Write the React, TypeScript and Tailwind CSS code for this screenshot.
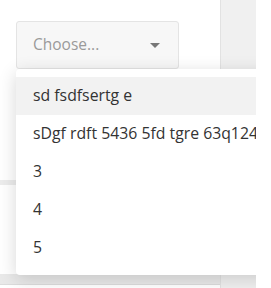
import React from 'react';

const options = ['sd fsdfsertg e', 'sDgf rdft 5436 5fd tgre 63q1245 wert', '3', '4', '5'];

export default function App() {
  return (
    <div className="w-[271px] h-[288px] bg-white" style={{ fontFamily: '"Open Sans", sans-serif' }}>
      <div className="relative w-[256px] h-[288px] overflow-hidden flex">
        {/* page behind the menu */}
        <div className="w-[220px] flex flex-col">
          <div className="pt-[21px] pl-4">
            <button className="w-[163px] h-[48px] flex items-center justify-between pl-4 pr-[18px] bg-[#f7f7f7] border border-[#e4e4e4] rounded-[3px]">
              <span className="text-[15.5px] text-[#9a9a9a]">Choose...</span>
              <span className="w-0 h-0 border-l-[5px] border-r-[5px] border-t-[5px] border-l-transparent border-r-transparent border-t-[#777]" />
            </button>
          </div>
          <div className="mt-[111px] h-[5px] bg-[#ececec]" />
          <div className="mt-[89px] h-[11px] bg-[#e9e9e9] border-b border-[#dcdcdc]" />
        </div>
        <div className="w-[36px] bg-[#f0f0f0] border-l border-[#e2e2e2]" />

        {/* open menu */}
        <div className="absolute left-4 top-[69px] w-[260px] py-2 bg-white rounded-[4px] shadow-[0_4px_18px_rgba(0,0,0,0.16)]">
          {options.map((o, i) => (
            <div
              key={o}
              className={`h-[38px] flex items-center pl-[17px] text-[15.8px] text-[#333] whitespace-nowrap ${
                i === 0 ? 'bg-[#f2f2f2]' : ''
              }`}
            >
              {o}
            </div>
          ))}
        </div>
      </div>
    </div>
  );
}
